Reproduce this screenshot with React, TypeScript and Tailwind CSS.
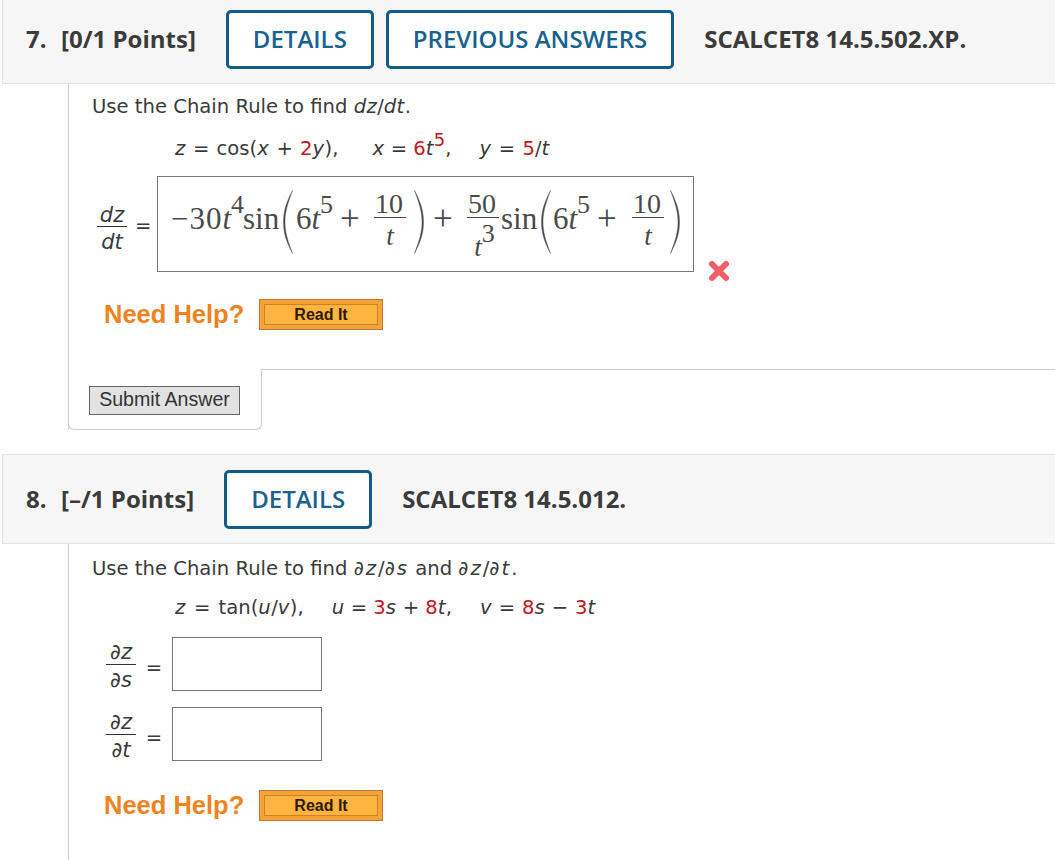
const OPEN = "font-['Open_Sans',sans-serif]"
const BODY = "font-['DejaVu_Sans',sans-serif] text-[19.6px] text-[#3a3a3a]"
const SERIF = "font-['Liberation_Serif',serif]"

function Red({ children }: { children: React.ReactNode }) {
  return <span className="text-[#c8141c]">{children}</span>
}

function I({ children }: { children: React.ReactNode }) {
  return <span className="italic tracking-[0.4px]">{children}</span>
}

function Partial({ children }: { children: React.ReactNode }) {
  return <span className="italic tracking-[2px]">{children}</span>
}

function Paren({ right = false }: { right?: boolean }) {
  return (
    <svg width="11" height="64" viewBox="0 0 11 64" className={`shrink-0 mt-[5px] ${right ? '-scale-x-100' : ''}`}>
      <path d="M10.5 0.5C3.5 14 1.5 22 1.5 32s2 18 9 31.5C5.5 50 3 42 3 32S5.5 14 10.5 0.5Z" fill="#4a4a4a" stroke="#4a4a4a" strokeWidth="0.4" />
    </svg>
  )
}

function Exp({ children }: { children: React.ReactNode }) {
  return <span className="w-[12px] shrink-0 text-[26px] -translate-y-[15px]">{children}</span>
}

function Fraction({ top, bottom }: { top: React.ReactNode; bottom: React.ReactNode }) {
  return (
    <span className="inline-flex flex-col items-center shrink-0 w-[32px]">
      <span className="h-[32px] leading-[38px] text-[28px] -ml-[2px]">{top}</span>
      <span className="w-full h-px bg-[#444]" />
      <span className="h-[36px] leading-[36px] text-[27px] italic">{bottom}</span>
    </span>
  )
}

function Plus({ className }: { className: string }) {
  return <span className={`w-[18px] shrink-0 text-center text-[35px] font-light ${className}`}>+</span>
}

function MathAnswer() {
  return (
    <div className={`${SERIF} w-[537px] h-[96px] border border-[#777] flex items-center pl-[13px] pb-[10px] text-[31px] text-[#4a4a4a] whitespace-nowrap bg-white`}>
      <span className="w-[60px] shrink-0 tracking-[1px]">−30<span className="italic">t</span></span>
      <Exp>4</Exp>
      <span className="w-[36px] shrink-0">sin</span>
      <span className="ml-[3px] flex"><Paren /></span>
      <span className="w-[24px] shrink-0 ml-[3px]">6<span className="italic">t</span></span>
      <Exp>5</Exp>
      <Plus className="ml-[8px]" />
      <span className="ml-[16px] flex"><Fraction top="10" bottom="t" /></span>
      <span className="ml-[8px] flex"><Paren right /></span>
      <Plus className="ml-[8px]" />
      <span className="ml-[16px] flex">
        <Fraction
          top="50"
          bottom={
            <span className="flex items-start pt-[3px] pl-[3px]">
              <span className="translate-y-[8px]">t</span>
              <span className="not-italic text-[26px] leading-[26px]">3</span>
            </span>
          }
        />
      </span>
      <span className="w-[36px] shrink-0 ml-[2px]">sin</span>
      <span className="ml-[3px] flex"><Paren /></span>
      <span className="w-[24px] shrink-0 ml-[2px]">6<span className="italic">t</span></span>
      <Exp>5</Exp>
      <Plus className="ml-[8px]" />
      <span className="ml-[17px] flex"><Fraction top="10" bottom="t" /></span>
      <span className="ml-[6px] flex"><Paren right /></span>
    </div>
  )
}

function Header({ num, points, buttons, code, height, shift }: { num: string; points: string; buttons: string[]; code: string; height: string; shift: string }) {
  return (
    <div className={`${OPEN} ${height} ${shift} ml-[2px] flex items-center bg-[#f6f6f6] border-l border-b border-[#e2e2e2] pl-[23px] text-[24px] font-bold text-[#3b3b3b] whitespace-nowrap`}>
      <span className="w-[35px]">{num}</span>
      <span>{points}</span>
      <div className="flex gap-[12px] ml-[30px]">
        {buttons.map((b) => (
          <button key={b} className="h-[59px] px-[24px] border-[3px] border-[#0f5c8a] rounded-[5px] bg-white text-[#17628f] font-semibold">
            {b}
          </button>
        ))}
      </div>
      <span className="ml-[30px]">{code}</span>
    </div>
  )
}

function NeedHelp() {
  return (
    <div className="flex items-center">
      <span className="font-['Liberation_Sans',sans-serif] font-bold text-[25.5px] text-[#ee8322] w-[155px]">Need Help?</span>
      <button className="w-[124px] h-[31px] bg-[#f2a33c] border border-[#c9772a] p-[4px] flex">
        <span className="flex-1 bg-[#ffb43f] border border-[#d27f26] pt-[2px] flex items-center justify-center font-['Liberation_Sans',sans-serif] font-bold text-[16px] text-[#2a1c08]">
          Read It
        </span>
      </button>
    </div>
  )
}

function DerivLabel({ top, bottom, topClass }: { top: React.ReactNode; bottom: React.ReactNode; topClass: string }) {
  return (
    <span className="inline-flex flex-col items-center w-[30px] italic leading-[26px] text-[21px]">
      <span className={`h-[27px] ${topClass}`}>{top}</span>
      <span className="w-full h-px bg-[#333]" />
      <span className="h-[27px] leading-[30px]">{bottom}</span>
    </span>
  )
}

function PartialRow({ bottom }: { bottom: string }) {
  return (
    <div className="flex items-center h-[54px] pl-[14px]">
      <DerivLabel top="∂z" bottom={bottom} topClass="leading-[30px]" />
      <span className="w-[36px] text-center mt-[7px]">=</span>
      <div className="w-[150px] h-[54px] border border-[#777] bg-white" />
    </div>
  )
}

export default function App() {
  return (
    <div className="w-[1055px] h-[860px] overflow-hidden bg-white">
      <Header num="7." points="[0/1 Points]" buttons={['DETAILS', 'PREVIOUS ANSWERS']} code="SCALCET8 14.5.502.XP." height="h-[84px]" shift="pb-[5px]" />

      <div className={`${BODY} ml-[68px] border-l border-[#ccc]`}>
        <div className="pl-[23px] pt-[9px] h-[285px]">
          <p className="h-[28px] leading-[28px]">Use the Chain Rule to find <I>dz</I>/<I>dt</I>.</p>
          <p className="mt-[14px] ml-[83px] h-[28px] leading-[28px] whitespace-pre">
            <span className="[word-spacing:1px]"><I>z</I> = cos(<I>x</I> + <Red>2</Red><I>y</I>),</span>
            <span className="ml-[34px]" />
            <I>x</I> = <Red>6</Red><I>t</I><sup className="text-[#c8141c] text-[18px] leading-none">5</sup>,
            <span className="ml-[28px]" />
            <span className="[word-spacing:1px]"><I>y</I> = <Red>5</Red>/<I>t</I></span>
          </p>
          <div className="flex mt-[13px]">
            <div className="flex items-center h-[96px] pl-[5px] w-[65px] shrink-0 pt-[4px]">
              <DerivLabel top="dz" bottom="dt" topClass="leading-[32px]" />
              <span className="ml-[8px]">=</span>
            </div>
            <MathAnswer />
            <svg width="22" height="22" viewBox="0 0 22 22" className="ml-[14px] mt-[84px] shrink-0">
              <path d="M4 4L18 18M18 4L4 18" stroke="#ef5f69" strokeWidth="6" strokeLinecap="round" />
            </svg>
          </div>
          <div className="mt-[13px] ml-[12px]">
            <NeedHelp />
          </div>
        </div>
        <div className="flex h-[61px] -ml-px">
          <div className="w-[194px] border-l border-b border-r border-[#ccc] rounded-b-[6px] pl-[20px] pt-[17px]">
            <button className="block w-[151px] h-[29px] pb-[1px] bg-[#e2e2e2] border border-[#666] font-['Liberation_Sans',sans-serif] text-[19.6px] text-[#333] leading-none">
              Submit Answer
            </button>
          </div>
          <div className="flex-1 border-t border-[#ccc]" />
        </div>
      </div>

      <div className="h-[24px]" />
      <div className="border-t border-[#e2e2e2] ml-[2px]" />
      <Header num="8." points="[–/1 Points]" buttons={['DETAILS']} code="SCALCET8 14.5.012." height="h-[89px]" shift="" />

      <div className={`${BODY} ml-[68px] h-[317px] border-l border-b border-[#ccc] pl-[23px] pt-[11px]`}>
        <p className="h-[28px] leading-[28px]">Use the Chain Rule to find <Partial>∂z</Partial>/<Partial>∂s</Partial> and <Partial>∂z</Partial>/<Partial>∂t</Partial>.</p>
        <p className="mt-[11px] ml-[83px] h-[28px] leading-[28px] whitespace-pre">
          <span className="[word-spacing:2px]"><I>z</I> = tan(<I>u</I>/<I>v</I>),</span>
          <span className="ml-[28px]" />
          <I>u</I> = <Red>3</Red><I>s</I> + <Red>8</Red><I>t</I>,
          <span className="ml-[28px]" />
          <span className="[word-spacing:0.5px]"><I>v</I> = <Red>8</Red><I>s</I> − <Red>3</Red><I>t</I></span>
        </p>
        <div className="mt-[15px] flex flex-col gap-[16px]">
          <PartialRow bottom="∂s" />
          <PartialRow bottom="∂t" />
        </div>
        <div className="mt-[25px] ml-[12px]">
          <NeedHelp />
        </div>
      </div>
    </div>
  )
}
